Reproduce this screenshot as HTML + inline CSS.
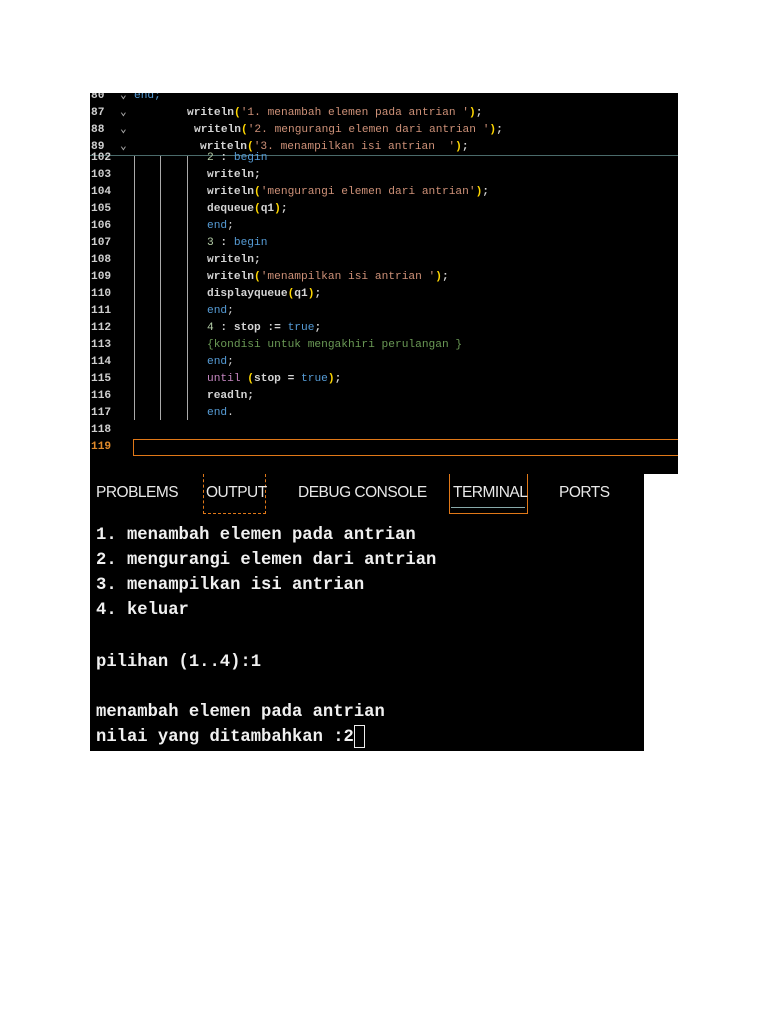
<!DOCTYPE html>
<html><head><meta charset="utf-8"><style>
body{margin:0;width:768px;height:1024px;background:#fff;position:relative;overflow:hidden}
#ed{position:absolute;left:90px;top:93px;width:588px;height:381px;background:#000;overflow:hidden}
.l{position:absolute;left:0;height:17px;line-height:17px;font-family:"Liberation Mono",monospace;font-size:11.2px;color:#d4d4d4;white-space:pre;font-weight:bold}
.n{position:absolute;left:1px;color:#cfcfcf}
.c{position:absolute}
.s{color:#ce9178;font-weight:normal}.y{color:#ffd700}.b{color:#569cd6;font-weight:normal}.g{color:#b5cea8;font-weight:normal}.cm{color:#6a9955;font-weight:normal}.p{color:#c586c0;font-weight:normal}
.gd{position:absolute;width:1px;background:#aaa;top:62px;height:265px}
#term{position:absolute;left:90px;top:474px;width:554px;height:277px;background:#000}
.tab{position:absolute;top:10px;font-family:"Liberation Sans",sans-serif;font-size:15.5px;color:#e8e8e8;letter-spacing:-0.5px}
.t{position:absolute;left:6px;font-family:"Liberation Mono",monospace;font-size:17.2px;color:#f0f0f0;font-weight:bold;white-space:pre;line-height:25px}
</style></head><body>
<div id="ed">
<div class="gd" style="left:44px"></div><div class="gd" style="left:70px"></div><div class="gd" style="left:97px"></div>
<div class="l" style="top:-5px"><span class="n">80</span><span class="c" style="left:30px;color:#aaa">⌄</span><span class="c b" style="left:44px">end;</span></div>
<div class="l" style="top:12px"><span class="n">87</span><span class="c" style="left:30px;color:#aaa">⌄</span><span class="c" style="left:97px">writeln<span class="y">(</span><span class="s">'1. menambah elemen pada antrian '</span><span class="y">)</span>;</span></div>
<div class="l" style="top:29px"><span class="n">88</span><span class="c" style="left:30px;color:#aaa">⌄</span><span class="c" style="left:104px">writeln<span class="y">(</span><span class="s">'2. mengurangi elemen dari antrian '</span><span class="y">)</span>;</span></div>
<div class="l" style="top:46px"><span class="n">89</span><span class="c" style="left:30px;color:#aaa">⌄</span><span class="c" style="left:110px">writeln<span class="y">(</span><span class="s">'3. menampilkan isi antrian  '</span><span class="y">)</span>;</span></div>
<div style="position:absolute;left:0;top:62px;width:588px;height:1px;background:#4a6a6a"></div>
<div class="l" style="top:57px"><span class="n">102</span><span class="c" style="left:117px"><span class="g">2</span> : <span class="b">begin</span></span></div>
<div class="l" style="top:74px"><span class="n">103</span><span class="c" style="left:117px">writeln;</span></div>
<div class="l" style="top:91px"><span class="n">104</span><span class="c" style="left:117px">writeln<span class="y">(</span><span class="s">'mengurangi elemen dari antrian'</span><span class="y">)</span>;</span></div>
<div class="l" style="top:108px"><span class="n">105</span><span class="c" style="left:117px">dequeue<span class="y">(</span>q1<span class="y">)</span>;</span></div>
<div class="l" style="top:125px"><span class="n">106</span><span class="c b" style="left:117px">end<span style="color:#d4d4d4">;</span></span></div>
<div class="l" style="top:142px"><span class="n">107</span><span class="c" style="left:117px"><span class="g">3</span> : <span class="b">begin</span></span></div>
<div class="l" style="top:159px"><span class="n">108</span><span class="c" style="left:117px">writeln;</span></div>
<div class="l" style="top:176px"><span class="n">109</span><span class="c" style="left:117px">writeln<span class="y">(</span><span class="s">'menampilkan isi antrian '</span><span class="y">)</span>;</span></div>
<div class="l" style="top:193px"><span class="n">110</span><span class="c" style="left:117px">displayqueue<span class="y">(</span>q1<span class="y">)</span>;</span></div>
<div class="l" style="top:210px"><span class="n">111</span><span class="c b" style="left:117px">end<span style="color:#d4d4d4">;</span></span></div>
<div class="l" style="top:227px"><span class="n">112</span><span class="c" style="left:117px"><span class="g">4</span> : stop := <span class="b">true</span>;</span></div>
<div class="l" style="top:244px"><span class="n">113</span><span class="c cm" style="left:117px">{kondisi untuk mengakhiri perulangan }</span></div>
<div class="l" style="top:261px"><span class="n">114</span><span class="c b" style="left:117px">end<span style="color:#d4d4d4">;</span></span></div>
<div class="l" style="top:278px"><span class="n">115</span><span class="c" style="left:117px"><span class="p">until</span> <span class="y">(</span>stop = <span class="b">true</span><span class="y">)</span>;</span></div>
<div class="l" style="top:295px"><span class="n">116</span><span class="c" style="left:117px">readln;</span></div>
<div class="l" style="top:312px"><span class="n">117</span><span class="c b" style="left:117px">end<span style="color:#d4d4d4">.</span></span></div>
<div class="l" style="top:329px"><span class="n">118</span></div>
<div class="l" style="top:346px"><span class="n" style="color:#e08a2a">119</span></div>
<div style="position:absolute;left:43px;top:346px;width:560px;height:15px;border:1px solid #e07818"></div>
</div>
<div id="term">
<div class="tab" style="left:6px">PROBLEMS</div>
<div style="position:absolute;left:113px;top:0;width:61px;height:39px;border:1px dashed #e07818;border-top:none"></div>
<div class="tab" style="left:116px">OUTPUT</div>
<div class="tab" style="left:208px">DEBUG CONSOLE</div>
<div style="position:absolute;left:359px;top:0;width:77px;height:39px;border:1px solid #e07818;border-top:none"></div>
<div style="position:absolute;left:361px;top:33px;width:74px;height:1px;background:#8aa"></div>
<div class="tab" style="left:363px">TERMINAL</div>
<div class="tab" style="left:469px">PORTS</div>
<div class="t" style="top:49px">1. menambah elemen pada antrian</div>
<div class="t" style="top:74px">2. mengurangi elemen dari antrian</div>
<div class="t" style="top:99px">3. menampilkan isi antrian</div>
<div class="t" style="top:124px">4. keluar</div>
<div class="t" style="top:176px">pilihan (1..4):1</div>
<div class="t" style="top:226px">menambah elemen pada antrian</div>
<div class="t" style="top:251px">nilai yang ditambahkan :2</div>
<div style="position:absolute;left:264px;top:251px;width:9px;height:21px;border:1.5px solid #eee"></div>
</div>
</body></html>
